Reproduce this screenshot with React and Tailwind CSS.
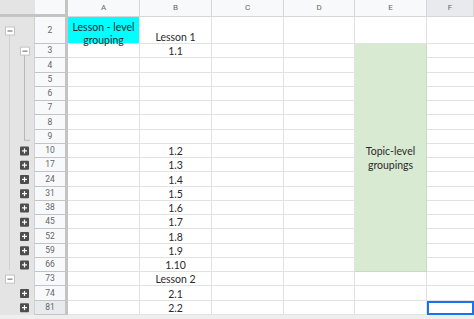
import React from 'react';

const cols = ['A', 'B', 'C', 'D', 'E', 'F'];

// rows below the header row 2, with the value shown in column B
const rows = [
  { n: '3', b: '1.1' },
  { n: '4' },
  { n: '5' },
  { n: '6' },
  { n: '7' },
  { n: '8' },
  { n: '9' },
  { n: '10', b: '1.2' },
  { n: '17', b: '1.3' },
  { n: '24', b: '1.4' },
  { n: '31', b: '1.5' },
  { n: '38', b: '1.6' },
  { n: '45', b: '1.7' },
  { n: '52', b: '1.8' },
  { n: '59', b: '1.9' },
  { n: '66', b: '1.10' },
  { n: '73', b: 'Lesson 2' },
  { n: '74', b: '2.1' },
  { n: '81', b: '2.2', selected: true },
];

const ROW_H = 14.25;
const TOP = 27; // row 2 height, gutter starts under the header

const Minus = ({ x, cy }) => (
  <g>
    <rect x={x + 0.5} y={cy - 4} width="9" height="8" fill="#fff" stroke="#c4c4c4" />
    <line x1={x + 2.5} y1={cy} x2={x + 7.5} y2={cy} stroke="#5f6368" strokeWidth="1" />
  </g>
);

const Plus = ({ x, cy }) => (
  <g>
    <rect x={x} y={cy - 4.5} width="9" height="9" rx="1" fill="#4d4d4d" />
    <line x1={x + 2} y1={cy} x2={x + 7} y2={cy} stroke="#fff" strokeWidth="1.2" />
    <line x1={x + 4.5} y1={cy - 2.5} x2={x + 4.5} y2={cy + 2.5} stroke="#fff" strokeWidth="1.2" />
  </g>
);

const rowCenter = (i) => TOP + i * ROW_H + ROW_H / 2;

const OutlineGutter = () => (
  <svg width="35" height="302" className="block">
    {/* level 1 */}
    <line x1="9.5" y1="18" x2="9.5" y2={TOP + 16 * ROW_H - 2} stroke="#cfcfcf" />
    <Minus x={5} cy={14} />
    {/* level 2 */}
    <line x1="24.5" y1={rowCenter(0) + 4} x2="24.5" y2={TOP + 7 * ROW_H - 3} stroke="#b8b8b8" />
    <line x1="24.5" y1={TOP + 7 * ROW_H - 3.5} x2="30" y2={TOP + 7 * ROW_H - 3.5} stroke="#b8b8b8" />
    <Minus x={20} cy={rowCenter(0)} />
    {[7, 8, 9, 10, 11, 12, 13, 14, 15, 17, 18].map((i) => (
      <Plus key={i} x={20} cy={rowCenter(i)} />
    ))}
    <Minus x={5} cy={rowCenter(16)} />
  </svg>
);

const App = () => {
  return (
    <div className="w-[474px] h-[319px] overflow-hidden bg-white font-['Lato','Open_Sans',sans-serif] text-[10.5px] text-[#2a2a2a]">
      <div className="grid h-[319px] grid-cols-[35px_33px_72px_72px_72px_71px_72px_1fr] grid-rows-[17px_27px_repeat(19,14.25px)_1fr]">
        {/* corner */}
        <div className="bg-[#e4e4e4] border-b-[3px] border-[#c4c4c4]" />
        <div className="bg-[#f8f9fa] border-b-[3px] border-r-[3px] border-[#c4c4c4]" />
        {cols.map((c) => (
          <div
            key={c}
            className={`flex items-center justify-center border-r border-b border-[#d6d6d6] font-['Roboto',sans-serif] text-[8px] text-[#666] ${
              c === 'F' ? 'bg-[#e8eaed]' : 'bg-[#f8f9fa]'
            }`}
          >
            {c}
          </div>
        ))}

        {/* outline gutter */}
        <div className="col-start-1 row-start-2 row-span-20 bg-[#e4e4e4] border-r border-[#d0d0d0]">
          <OutlineGutter />
        </div>

        {/* merged topic cell E3:E66 */}
        <div className="col-start-7 row-start-3 row-span-16 flex items-center justify-center bg-[#d9ead3] border-r border-b border-[#c5dcc0]">
          <span className="block text-center leading-[14px]">
            Topic-level
            <br />
            groupings
          </span>
        </div>

        {/* row 2 */}
        <div className="flex items-center justify-center bg-[#f8f9fa] border-r-[3px] border-b border-[#c4c4c4] font-['Roboto',sans-serif] text-[8.5px] text-[#666]">
          2
        </div>
        <div className="flex items-start justify-center pt-[4px] bg-[#00ffff] border-r border-b border-[#e2e2e2]">
          <span className="block text-center leading-[13px]">
            Lesson - level
            <br />
            grouping
          </span>
        </div>
        <div className="flex items-end justify-center leading-[11px] border-r border-b border-[#e2e2e2]">
          Lesson 1
        </div>
        <div className="border-r border-b border-[#e2e2e2]" />
        <div className="border-r border-b border-[#e2e2e2]" />
        <div className="border-r border-b border-[#e2e2e2]" />
        <div className="border-b border-[#e2e2e2]" />

        {rows.map((r, i) => (
          <React.Fragment key={r.n}>
            <div
              className={`flex items-center justify-center border-r-[3px] border-b border-[#c4c4c4] font-['Roboto',sans-serif] text-[8.5px] text-[#666] ${
                r.selected ? 'bg-[#e8eaed]' : 'bg-[#f8f9fa]'
              }`}
            >
              {r.n}
            </div>
            <div className="border-r border-b border-[#e2e2e2]" />
            <div className="flex items-end justify-center leading-[12px] border-r border-b border-[#e2e2e2]">
              {r.b || ''}
            </div>
            <div className="border-r border-b border-[#e2e2e2]" />
            <div className="border-r border-b border-[#e2e2e2]" />
            {i >= 16 && <div className="border-r border-b border-[#e2e2e2]" />}
            {r.selected ? (
              <div className="border-2 border-[#1a73e8]" />
            ) : (
              <div className="border-b border-[#e2e2e2]" />
            )}
          </React.Fragment>
        ))}

        {/* bottom strip */}
        <div className="col-span-8 bg-[#eeeeee]" />
      </div>
    </div>
  );
};

export default App;
